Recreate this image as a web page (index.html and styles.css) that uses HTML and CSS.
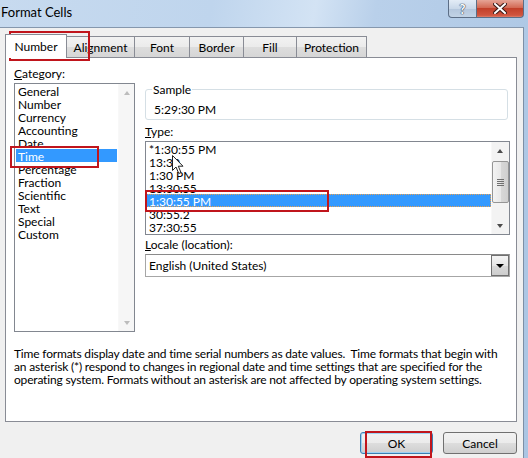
FILE: index.html
```html
<!DOCTYPE html>
<html lang="en">
<head>
<meta charset="UTF-8">
<title>Format Cells</title>

<link rel="stylesheet" href="styles.css">
</head>

<body>

<div class="window">

    <div class="titlebar">
        <span class="title">Format Cells</span>
        <div class="caption">
            <div class="cap help">?</div>
            <div class="cap close">
                <svg width="14" height="11" viewBox="0 0 14 11">
                    <path d="M2 1 L12 10 M12 1 L2 10" stroke="#3b1a16" stroke-width="4" stroke-linecap="square"/>
                    <path d="M2 1 L12 10 M12 1 L2 10" stroke="#fff" stroke-width="2" stroke-linecap="square"/>
                </svg>
            </div>
        </div>
    </div>

    <div class="dialog">

        <div class="tabs">
            <div class="tab active" style="width:62px">Number</div>
            <div class="tab" style="width:69px">Alignment</div>
            <div class="tab" style="width:56px">Font</div>
            <div class="tab" style="width:55px">Border</div>
            <div class="tab" style="width:54px">Fill</div>
            <div class="tab" style="width:71px">Protection</div>
        </div>

        <div class="panel">
            <div class="columns">

                <div class="col">
                    <div class="label"><u>C</u>ategory:</div>
                    <div class="listbox category">
                        <ul class="items">
                            <li>General</li>
                            <li>Number</li>
                            <li>Currency</li>
                            <li>Accounting</li>
                            <li>Date</li>
                            <li class="selected">Time</li>
                            <li>Percentage</li>
                            <li>Fraction</li>
                            <li>Scientific</li>
                            <li>Text</li>
                            <li>Special</li>
                            <li>Custom</li>
                        </ul>
                        <div class="vscroll off">
                            <span class="arrow up"></span>
                            <span class="arrow down"></span>
                        </div>
                    </div>
                </div>

                <div class="col right">
                    <fieldset class="sample">
                        <legend>Sample</legend>
                        <div class="sampleText">5:29:30 PM</div>
                    </fieldset>

                    <div class="label typeLabel"><u>T</u>ype:</div>
                    <div class="listbox type">
                        <ul class="items">
                            <li>*1:30:55 PM</li>
                            <li>13:30</li>
                            <li>1:30 PM</li>
                            <li>13:30:55</li>
                            <li class="selected focus">1:30:55 PM</li>
                            <li>30:55.2</li>
                            <li>37:30:55</li>
                        </ul>
                        <div class="vscroll">
                            <span class="arrow up"></span>
                            <div class="thumb"><i></i><i></i><i></i><i></i></div>
                            <span class="arrow down"></span>
                        </div>
                    </div>

                    <div class="label localeLabel"><u>L</u>ocale (location):</div>
                    <div class="combo">
                        <span>English (United States)</span>
                        <div class="dropBtn"><span class="arrow down"></span></div>
                    </div>
                </div>

            </div>

            <p class="desc">
                Time formats display date and time serial numbers as date values.&nbsp; Time formats that begin with<br>
                an asterisk (*) respond to changes in regional date and time settings that are specified for the<br>
                operating system. Formats without an asterisk are not affected by operating system settings.
            </p>
        </div>

        <div class="buttons">
            <button class="btn default">OK</button>
            <button class="btn">Cancel</button>
        </div>

    </div>

    <!-- mouse pointer over the type list -->
    <svg class="pointer" width="13" height="20" viewBox="0 0 13 20">
        <path d="M0.5 0.5 L0.5 15.5 L4 12 L6.8 18.5 L9 17.5 L6.3 11.2 L11 11.2 Z" fill="#fff" stroke="#222" stroke-width="1"/>
    </svg>

    <!-- red call-out boxes -->
    <div class="mark" style="left:9px;top:31px;width:81px;height:30px"></div>
    <div class="mark" style="left:10px;top:146px;width:89px;height:22px"></div>
    <div class="mark" style="left:145px;top:190px;width:184px;height:22px"></div>
    <div class="mark" style="left:365px;top:431px;width:67px;height:27px"></div>

</div>

</body>
</html>
```

FILE: styles.css
```css
body{
    margin:0;
    font-family:Lato, "Noto Sans", sans-serif;
    font-size:12px;
    color:#000;
}

.window{
    position:relative;
    width:528px;
    height:458px;
    overflow:hidden;
    background:linear-gradient(100deg,#c7daef 0%,#bfd5ed 35%,#d3e3f4 52%,#b9d0ea 62%,#aac5e3 100%);
}

/* title bar */
.titlebar{
    display:flex;
    align-items:flex-start;
    height:27px;
}

.title{
    padding:5px 0 0 1px;
    line-height:15px;
    font-size:13px;
}

.caption{
    display:flex;
    margin-left:auto;
    margin-right:4px;
}

.cap{
    height:17px;
    border:1px solid #5c6e86;
    border-top:none;
    display:flex;
    justify-content:center;
    align-items:center;
}

.help{
    width:27px;
    border-radius:0 0 0 4px;
    background:linear-gradient(#e3ecf6,#c9d8e9 50%,#b3c6dc 51%,#c2d3e6);
    color:#fff;
    font-weight:bold;
    font-size:13px;
    text-shadow:0 0 1px #34465e,0 0 1px #34465e,0 0 1px #34465e;
}

.close{
    width:46px;
    border-left:none;
    border-radius:0 0 4px 0;
    background:linear-gradient(#e6a496,#d36a55 45%,#c2402a 50%,#d0553f 90%,#e0806b);
}

/* dialog body */
.dialog{
    width:523px;
    height:430px;
    background:#f0f0f0;
    border-top:1px solid #8597ad;
    border-right:1px solid #7d8fa5;
}

.tabs{
    display:flex;
    align-items:flex-end;
    height:23px;
    padding:6px 0 0 5px;
}

.tab{
    box-sizing:border-box;
    height:21px;
    margin-left:-1px;
    border:1px solid #898c95;
    border-bottom:none;
    background:linear-gradient(#f2f2f2,#ebebeb 50%,#dddddd 51%,#d6d6d6);
    text-align:center;
    line-height:22px;
}

.tab.active{
    position:relative;
    z-index:1;
    height:24px;
    margin-left:0;
    margin-bottom:-1px;
    background:#fff;
    line-height:24px;
}

.panel{
    box-sizing:border-box;
    width:512px;
    height:365px;
    margin-left:5px;
    border:1px solid #898c95;
    background:#fff;
}

.columns{
    display:grid;
    grid-template-columns:121px 365px;
    column-gap:10px;
    padding:8px 0 0 8px;
}

.label{
    line-height:15px;
}

.col .label{
    margin-bottom:2px;
}

.right{
    padding-top:16px;
}

/* list boxes */
.listbox{
    box-sizing:border-box;
    display:flex;
    border:1px solid #828790;
    background:#fff;
}

.category{
    height:249px;
}

.items{
    flex:1;
    list-style:none;
    margin:0;
    padding:0;
    overflow:hidden;
}

.items li{
    height:13px;
    line-height:15px;
    padding-left:3px;
    white-space:nowrap;
}

.category .items li{
    margin:0 1px;
    padding-left:2px;
}

.items li.selected{
    background:#3399ff;
    color:#fff;
}

.items li.focus{
    outline:1px dotted #e8a050;
    outline-offset:-1px;
}

.vscroll{
    position:relative;
    width:17px;
    background:#f3f3f3;
    border-left:1px solid #f8f8f8;
}

.category .vscroll{
    width:15px;
    background:#f6f6f6;
}

.arrow{
    position:absolute;
    left:5px;
    width:0;
    height:0;
    border-left:3.5px solid transparent;
    border-right:3.5px solid transparent;
}

.arrow.up{
    top:7px;
    border-bottom:4px solid #4c4c4c;
}

.arrow.down{
    bottom:6px;
    border-top:4px solid #4c4c4c;
}

.off .arrow.up{ border-bottom-color:#bcbcbc; }
.off .arrow.down{ border-top-color:#bcbcbc; }

.thumb{
    position:absolute;
    top:19px;
    left:0;
    width:15px;
    height:40px;
    border:1px solid #959595;
    border-radius:2px;
    background:linear-gradient(90deg,#f3f3f3,#e8e8e8 50%,#d8d8d8 51%,#cfcfcf);
    display:flex;
    flex-direction:column;
    justify-content:center;
    align-items:center;
    gap:1px;
}

.thumb i{
    display:block;
    width:7px;
    height:1px;
    background:#6f6f6f;
}

/* sample group */
.sample{
    margin:0 2px 0 0;
    padding:0 0 0 6px;
    border:1px solid #d5dfe5;
    border-radius:3px;
}

.sample legend{
    padding:0 1px;
    line-height:15px;
}

.sampleText{
    padding:5px 0 2px 2px;
    line-height:15px;
}

.typeLabel{
    margin-top:4px;
}

.type{
    height:94px;
    margin-top:2px;
}

.localeLabel{
    margin-top:2px;
}

/* locale drop-down */
.combo{
    box-sizing:border-box;
    display:flex;
    align-items:center;
    height:23px;
    border:1px solid #a6a6a6;
    border-top-color:#8a8a8a;
    background:#fff;
    padding-left:3px;
}

.combo span{
    flex:1;
}

.dropBtn{
    position:relative;
    box-sizing:border-box;
    width:18px;
    height:21px;
    border:1px solid #707070;
    background:linear-gradient(#f4f4f4,#e6e6e6 50%,#d9d9d9 51%,#cdcdcd);
}

.dropBtn .arrow.down{
    left:4px;
    bottom:7px;
    border-left-width:4px;
    border-right-width:4px;
    border-top:4px solid #000;
}

.desc{
    margin:15px 0 0 8px;
    line-height:13px;
    letter-spacing:-0.18px;
    white-space:nowrap;
}

/* bottom buttons */
.buttons{
    display:flex;
    justify-content:flex-end;
    gap:10px;
    width:512px;
    margin:10px 0 0 5px;
}

.btn{
    box-sizing:border-box;
    width:74px;
    height:22px;
    padding:0;
    font-family:Lato, "Noto Sans", sans-serif;
    font-size:12px;
    color:#000;
    border:1px solid #707070;
    border-radius:3px;
    background:linear-gradient(#f2f2f2,#ebebeb 50%,#dddddd 51%,#cfcfcf);
}

.btn.default{
    width:73px;
    border-color:#3c7fb1;
    box-shadow:inset 0 0 0 1px #9fd3f4;
}

.pointer{
    position:absolute;
    left:172px;
    top:155px;
}

.mark{
    position:absolute;
    box-sizing:border-box;
    border:2px solid #c0151c;
}
```
